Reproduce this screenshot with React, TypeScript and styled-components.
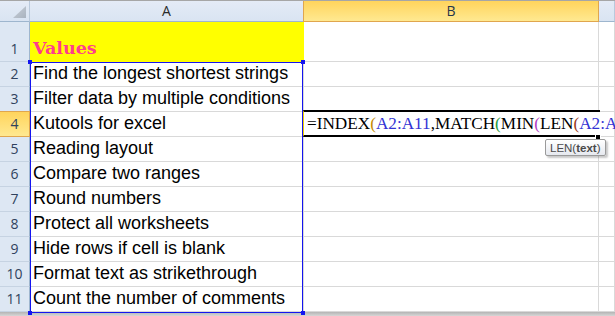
import { Fragment } from 'react';
import styled, { createGlobalStyle, css } from 'styled-components';

const GlobalStyle = createGlobalStyle`
  html, body {
    margin: 0;
    padding: 0;
    background: #fff;
    overflow: hidden;
  }
  #root {
    width: 615px;
    height: 316px;
    overflow: hidden;
  }
`;

const headerFill = 'linear-gradient(#e4ebf6, #d9e4f2)';
const selectedFill = 'linear-gradient(#ffd45c, #ffe991)';
const selectedEdge = '#e0a64e';
const gridLine = '#d9d9d9';

const Frame = styled.div`
  display: flex;
  flex-direction: column;
  width: 615px;
`;

const Sheet = styled.div`
  position: relative;
  display: grid;
  grid-template-columns: 30px 274px 295px 16px;
  grid-template-rows: 21px 40px repeat(10, 25px);
  border-top: 1px solid #a6a6a6;
`;

const Shade = styled.div`
  height: 4px;
  background: linear-gradient(#b4b4b4, #d6d6d6);
`;

const Corner = styled.div`
  box-sizing: border-box;
  display: flex;
  justify-content: flex-end;
  align-items: flex-end;
  padding: 0 3px 3px 0;
  background: ${headerFill};
  border-right: 1px solid #b9c9dc;
  border-bottom: 1px solid #9eb6ce;
`;

const ColHead = styled.div<{ $selected?: boolean }>`
  box-sizing: border-box;
  display: flex;
  align-items: center;
  justify-content: center;
  font: 14px/16px 'Open Sans', 'Noto Sans', sans-serif;
  color: #2b2b2b;
  background: ${headerFill};
  border-right: 1px solid #b9c9dc;
  border-bottom: 1px solid #9eb6ce;

  ${(p) =>
    p.$selected &&
    css`
      background: ${selectedFill};
      border-right-color: ${selectedEdge};
      border-bottom-color: ${selectedEdge};
      box-shadow: -1px 0 0 ${selectedEdge};
      color: #27364a;
    `}
`;

const RowHead = styled.div<{ $selected?: boolean }>`
  box-sizing: border-box;
  display: flex;
  align-items: flex-end;
  justify-content: center;
  padding-bottom: 4px;
  font: 14px/16px 'Open Sans', 'Noto Sans', sans-serif;
  color: #30425d;
  background: #dde7f3;
  border-right: 1px solid #9eb6ce;
  border-bottom: 1px solid #c6d3e2;

  ${(p) =>
    p.$selected &&
    css`
      background: ${selectedFill};
      border-right-color: ${selectedEdge};
      border-bottom-color: ${selectedEdge};
      box-shadow: 0 -1px 0 ${selectedEdge};
    `}
`;

const Cell = styled.div<{ $fill?: string }>`
  box-sizing: border-box;
  display: flex;
  align-items: flex-end;
  padding: 0 0 3px 3px;
  overflow: hidden;
  white-space: nowrap;
  font: 18px/20px 'Liberation Sans', Arial, sans-serif;
  color: #000;
  background: ${(p) => p.$fill ?? '#fff'};
  border-right: 1px solid ${(p) => p.$fill ?? gridLine};
  border-bottom: 1px solid ${(p) => p.$fill ?? gridLine};
`;

const Title = styled.span`
  font: bold 17.5px/20px 'DejaVu Serif', 'Liberation Serif', serif;
  color: #ff3d8e;
`;

const RefBox = styled.div`
  position: absolute;
  left: 30px;
  top: 61px;
  width: 273px;
  height: 251px;
  box-sizing: border-box;
  border: 1px solid #1414f0;
  pointer-events: none;
`;

const Handle = styled.span<{ $x: 'left' | 'right'; $y: 'top' | 'bottom' }>`
  position: absolute;
  width: 4px;
  height: 4px;
  background: #1414f0;
  ${(p) => p.$x}: -3px;
  ${(p) => p.$y}: -3px;
`;

const EditBox = styled.div`
  position: absolute;
  left: 303px;
  top: 109px;
  width: 297px;
  height: 27px;
  box-sizing: border-box;
  padding: 2px 0 0 3px;
  background: #fff;
  border-top: 2px solid #000;
  border-bottom: 2px solid #000;
  border-left: 1px solid #f0d000;
  font: 17.2px/20px 'Liberation Serif', 'Times New Roman', serif;
  color: #000;
  white-space: nowrap;
`;

const Ref = styled.span`
  color: #3333d4;
`;

const Paren = styled.span<{ $tone: string }>`
  color: ${(p) => p.$tone};
`;

const FillHandle = styled.span`
  position: absolute;
  left: 596px;
  top: 134px;
  width: 4px;
  height: 4px;
  background: #000;
  border: 1px solid #fff;
  box-sizing: content-box;
  margin: -1px 0 0 -1px;
`;

const Tip = styled.div`
  position: absolute;
  left: 545px;
  top: 138px;
  height: 17px;
  box-sizing: border-box;
  padding: 0 4px;
  display: flex;
  align-items: center;
  border: 1px solid #9a9a9a;
  border-radius: 2px;
  background: linear-gradient(#ffffff, #e6e9ef);
  box-shadow: 2px 2px 2px rgba(0, 0, 0, 0.22);
  font: 11.5px/14px 'Liberation Sans', Arial, sans-serif;
  color: #4a4a4a;

  b {
    font-weight: bold;
  }
`;

const items = [
  'Find the longest shortest strings',
  'Filter data by multiple conditions',
  'Kutools for excel',
  'Reading layout',
  'Compare two ranges',
  'Round numbers',
  'Protect all worksheets',
  'Hide rows if cell is blank',
  'Format text as strikethrough',
  'Count the number of comments',
];

const CornerMark = () => (
  <svg width="13" height="12" viewBox="0 0 13 12">
    <defs>
      <linearGradient id="cm" x1="0" y1="0" x2="1" y2="1">
        <stop offset="0" stopColor="#c8cfd8" />
        <stop offset="1" stopColor="#a9b3bf" />
      </linearGradient>
    </defs>
    <polygon points="13,0 13,12 0,12" fill="url(#cm)" />
  </svg>
);

export default function App() {
  return (
    <>
      <GlobalStyle />
      <Frame>
        <Sheet>
          <Corner>
            <CornerMark />
          </Corner>
          <ColHead>A</ColHead>
          <ColHead $selected>B</ColHead>
          <ColHead />

          <RowHead>1</RowHead>
          <Cell $fill="#ffff00">
            <Title>Values</Title>
          </Cell>
          <Cell />
          <Cell />

          {items.map((text, i) => (
            <Fragment key={text}>
              <RowHead $selected={i === 2}>{i + 2}</RowHead>
              <Cell>{text}</Cell>
              <Cell />
              <Cell />
            </Fragment>
          ))}

          <RefBox>
            <Handle $x="left" $y="top" />
            <Handle $x="right" $y="top" />
            <Handle $x="left" $y="bottom" />
            <Handle $x="right" $y="bottom" />
          </RefBox>

          <EditBox>
            =INDEX<Paren $tone="#c48a00">(</Paren>
            <Ref>A2:A11</Ref>,MATCH<Paren $tone="#1f9a3a">(</Paren>MIN
            <Paren $tone="#b23cc4">(</Paren>LEN
            <Paren $tone="#9b3a1a">(</Paren>
            <Ref>A2:A11</Ref>
            <Paren $tone="#9b3a1a">)</Paren>
            <Paren $tone="#b23cc4">)</Paren>,LEN(<Ref>A2:A11</Ref>),0))
          </EditBox>
          <FillHandle />

          <Tip>
            LEN(<b>text</b>)
          </Tip>
        </Sheet>
        <Shade />
      </Frame>
    </>
  );
}
